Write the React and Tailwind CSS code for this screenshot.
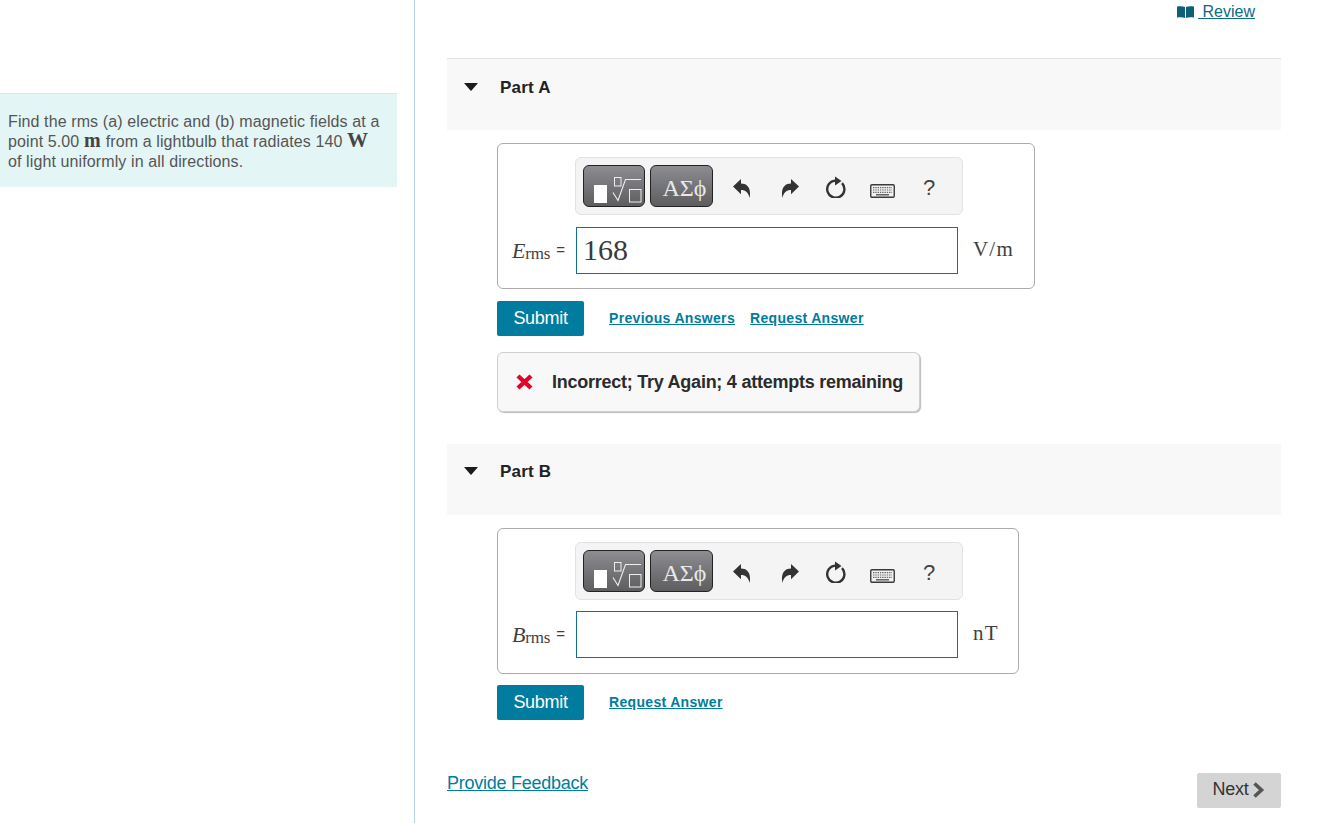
import React from "react";

const sans = "font-['Liberation_Sans',Arial,sans-serif]";
const serif = "font-['Liberation_Serif','Times_New_Roman',serif]";

function Caret() {
  return (
    <svg width="14" height="8" viewBox="0 0 14 8" className="block">
      <path d="M0.5 0H13.5Q14 0 13.6 0.6L7.5 7.6Q7 8 6.5 7.6L0.4 0.6Q0 0 0.5 0Z" fill="#1c1c1c" />
    </svg>
  );
}

function Keyboard() {
  return (
    <svg width="25" height="14" viewBox="0 0 25 14" className="block">
      <rect x="0.75" y="0.75" width="23.5" height="12.5" rx="1.2" fill="#f1f1f1" stroke="#3a3a3a" strokeWidth="1.4" />
      <path d="M3 3.6H22M3 6H22M3 8.4H22" stroke="#666" strokeWidth="1.2" strokeDasharray="1.4 0.9" />
      <path d="M6 10.8H19" stroke="#555" strokeWidth="1.4" />
    </svg>
  );
}

function Reset() {
  return (
    <svg width="22" height="22" viewBox="0 0 22 22" className="block">
      <path d="M17 7.2A8.6 8.6 0 1 1 10 4.6" fill="none" stroke="#333" strokeWidth="2.4" />
      <path d="M10 0.5L16.5 5L10 9.5Z" fill="#333" />
    </svg>
  );
}

function Arrow({ flip }) {
  return (
    <svg width="18" height="20" viewBox="0 0 18 20" className={flip ? "block -scale-x-100" : "block"}>
      <path d="M0 8.5L8 1V5.6C14 5.6 18.5 10 16.6 20C15.4 14.5 12.5 12 8 12V16.2Z" fill="#333" />
    </svg>
  );
}

function Templates() {
  return (
    <svg width="62" height="42" viewBox="0 0 62 42" className="block">
      <rect x="11" y="20" width="13" height="18" fill="#fff" />
      <rect x="31.5" y="12.5" width="6.5" height="8.5" fill="none" stroke="#eeeeee" strokeWidth="1" />
      <path d="M30 27.5L35 35.5L42.5 14.5H58" fill="none" stroke="#eeeeee" strokeWidth="1.1" />
      <rect x="46.5" y="24.5" width="11.5" height="12.5" fill="none" stroke="#eeeeee" strokeWidth="1" />
    </svg>
  );
}

function Toolbar() {
  return (
    <div className="flex h-[58px] w-[388px] items-center rounded-md border border-[#e2e2e2] bg-[#f4f4f4] pl-[7px]">
      <div className="h-[42px] w-[62px] rounded-md border border-[#222] bg-gradient-to-b from-[#8d8d92] to-[#5e5e60]">
        <div className="-m-px"><Templates /></div>
      </div>
      <div className={`ml-[5px] flex h-[42px] w-[63px] items-center justify-center rounded-md border border-[#222] bg-gradient-to-b from-[#8d8d92] to-[#5e5e60] pl-[6px] pt-[3px] text-[24px] text-[#e8e8e8] ${serif}`}>
        ΑΣϕ
      </div>
      <div className="ml-[20px] mt-[4px]"><Arrow /></div>
      <div className="ml-[30px] mt-[4px]"><Arrow flip /></div>
      <div className="ml-[26px] mt-[2px]"><Reset /></div>
      <div className="ml-[23px] mt-[10px]"><Keyboard /></div>
      <div className={`ml-[28px] mt-[4px] text-[22px] leading-[24px] text-[#444] ${sans}`}>?</div>
    </div>
  );
}

function AnswerBox({ sym, unit, value, width, gap }) {
  return (
    <div className={`ml-[50px] h-[146px] rounded-md border border-[#ababab] pt-[13px] ${width}`}>
      <div className="ml-[77px]"><Toolbar /></div>
      <div className={`flex items-center ${gap}`}>
        <div className={`flex w-[78px] items-center justify-end pr-[11px] text-[#3f3f3f] ${serif}`}>
          <span className="text-[22px] italic">{sym}</span>
          <span className="mt-[7px] text-[17px] tracking-[-0.2px]">rms</span>
          <span className={`ml-[6px] text-[15px] ${sans}`}>=</span>
        </div>
        <div className={`flex h-[47px] w-[382px] items-center border border-[#0f7390] pb-[2px] pl-[6px] text-[30px] text-[#3a3a3a] ${serif}`}>
          {value}
        </div>
        <div className={`ml-[15px] pb-[1px] text-[21px] tracking-[1.2px] text-[#3f3f3f] ${serif}`}>{unit}</div>
      </div>
    </div>
  );
}

function Submit({ links, gap }) {
  return (
    <div className={`ml-[50px] flex h-[35px] items-center ${gap}`}>
      <div className="flex h-[35px] w-[87px] items-center justify-center rounded-[2px] bg-[#007c9e] text-[18px] tracking-[-0.3px] text-white">
        Submit
      </div>
      <div className="ml-[25px] flex gap-[15px] text-[14px] font-bold tracking-[0.32px] text-[#007c9e] underline">
        {links.map((l) => <span key={l}>{l}</span>)}
      </div>
    </div>
  );
}

function PartHeader({ title, box }) {
  return (
    <div className={`flex bg-[#f8f8f8] pl-[17px] ${box}`}>
      <div className="flex h-[18px] items-center"><Caret /></div>
      <div className="ml-[22px] mt-[1px] text-[17px] font-bold leading-[18px] tracking-[0.2px] text-[#222]">{title}</div>
    </div>
  );
}

export default function App() {
  return (
    <div className={`flex h-[823px] w-[1321px] overflow-hidden bg-white ${sans}`}>
      <aside className="h-full w-[415px] shrink-0 border-r border-[#b5d0e4] pt-[93px]">
        <div className="h-[94px] w-[397px] border-t border-[#d8e6e8] bg-[#e4f5f6] pl-[8px] pt-[18px] text-[16px] leading-[20px] tracking-[0.11px] text-[#555]">
          Find the rms (a) electric and (b) magnetic fields at a<br />
          point 5.00 <span className={`text-[20px] font-bold leading-[0] tracking-[0.5px] text-[#444] ${serif}`}>m</span> from a lightbulb that radiates 140 <span className={`text-[21px] font-bold leading-[0] text-[#444] ${serif}`}>W</span><br />
          of light uniformly in all directions.
        </div>
      </aside>
      <main className="flex-1 pl-[32px] pr-[40px]">
        <div className="flex h-[58px] justify-end pr-[26px] pt-[2px]">
          <div className="flex h-[20px] items-center text-[16px] text-[#0e6a85]">
            <svg width="17" height="12" viewBox="0 0 17 12" className="block">
              <path d="M0 0.5C3 0 6 0 8 1V12C6 11 3 11 0 11.5ZM9 1C11 0 14 0 17 0.5V11.5C14 11 11 11 9 12Z" fill="#0e5f78" />
            </svg>
            <span className="ml-[4px] whitespace-pre underline"> Review</span>
          </div>
        </div>
        <PartHeader title="Part A" box="h-[72px] border-t border-[#e4e4e4] pt-[19px]" />
        <div className="h-[13px]" />
        <AnswerBox sym="E" unit="V/m" value="168" width="w-[538px]" gap="mt-[12px]" />
        <Submit links={["Previous Answers", "Request Answer"]} gap="mt-[12px]" />
        <div className="ml-[50px] mt-[16px] flex h-[60px] w-[423px] items-center rounded-md border border-[#cfcfcf] bg-[#f8f8f8] pl-[18px] shadow-[1px_1px_1px_#bbb]">
          <svg width="17" height="16" viewBox="0 0 17 16" className="block">
            <path d="M2 2L15 14M15 2L2 14" stroke="#e3002b" strokeWidth="4.4" />
          </svg>
          <span className="ml-[19px] text-[18px] font-bold tracking-[-0.25px] text-[#2b2b2b]">Incorrect; Try Again; 4 attempts remaining</span>
        </div>
        <div className="h-[32px]" />
        <PartHeader title="Part B" box="h-[71px] pt-[18px]" />
        <div className="h-[13px]" />
        <AnswerBox sym="B" unit="nT" value="" width="w-[522px]" gap="mt-[11px]" />
        <Submit links={["Request Answer"]} gap="mt-[11px]" />
        <div className="mt-[53px] flex items-start justify-between">
          <span className="-mt-[3px] text-[18px] tracking-[-0.26px] text-[#007c9e] underline">Provide Feedback</span>
          <div className="flex h-[35px] w-[84px] items-center justify-center rounded-[2px] bg-[#d4d4d4] pb-[2px] text-[18px] tracking-[-0.3px] text-[#333]">
            Next
            <svg width="13" height="16" viewBox="0 0 13 16" className="ml-[4px] block">
              <path d="M2.5 1.5L9.5 8L2.5 14.5" fill="none" stroke="#555" strokeWidth="3.6" />
            </svg>
          </div>
        </div>
      </main>
    </div>
  );
}
